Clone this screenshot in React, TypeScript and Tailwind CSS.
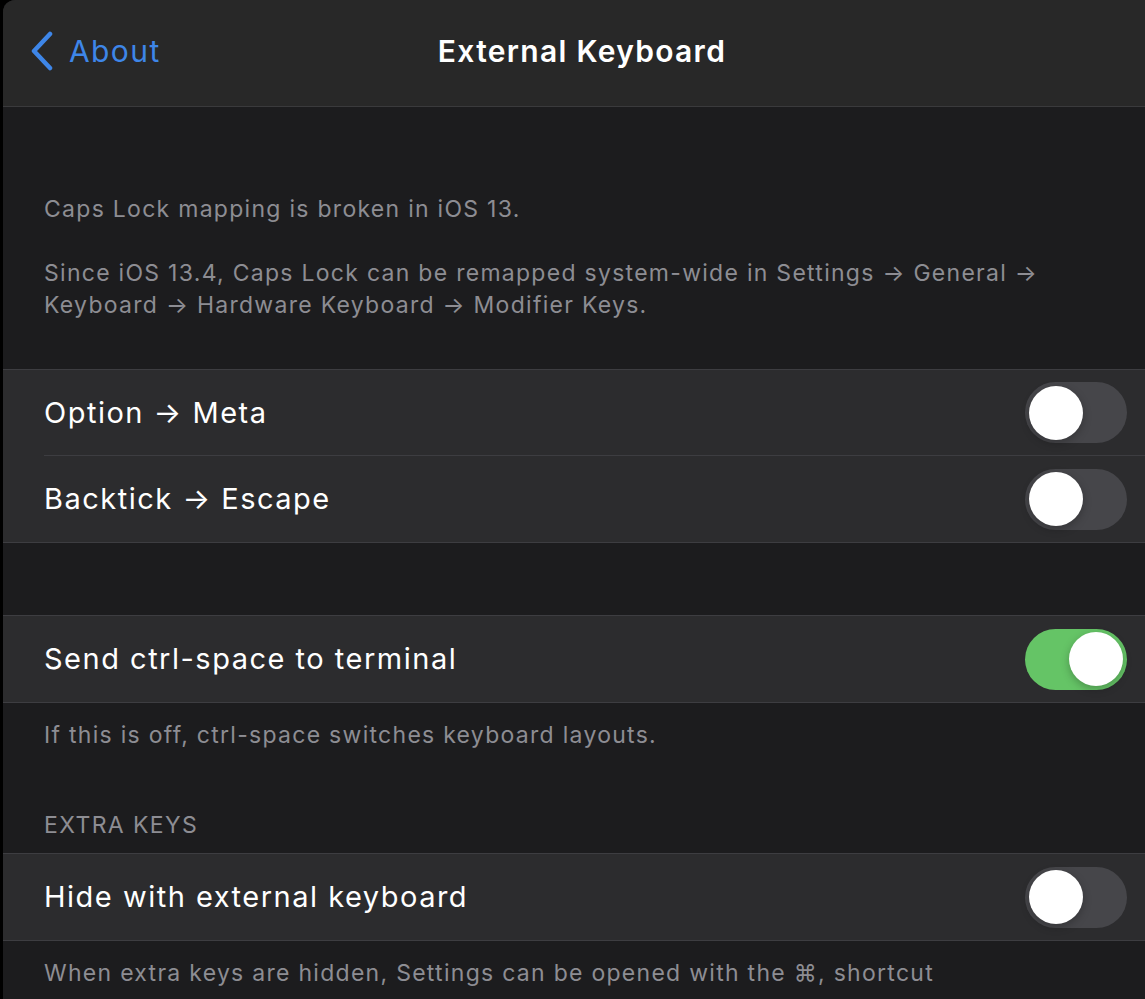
import React from "react";

function Toggle({ on }: { on?: boolean }) {
  return (
    <div
      className={`relative h-[61px] w-[102px] shrink-0 rounded-full ${on ? "bg-[#65c466]" : "bg-[#46464a]"}`}
    >
      <div
        className={`absolute top-[3.5px] h-[54px] w-[54px] rounded-full bg-white shadow-[0_3px_8px_rgba(0,0,0,0.25)] ${on ? "right-[4px]" : "left-[4px]"}`}
      />
    </div>
  );
}

function Row({ label, on, last }: { label: string; on?: boolean; last?: boolean }) {
  return (
    <div className="flex h-[86px] items-center bg-[#2c2c2e] pl-[41px]">
      <div className={`flex h-full flex-1 items-center justify-between pr-[18px] ${last ? "" : "border-b border-[#3d3d41]"}`}>
        <span className="text-[29px] tracking-[1.5px] text-white">{label}</span>
        <Toggle on={on} />
      </div>
    </div>
  );
}

export default function App() {
  return (
    <div
      className="flex min-h-[999px] w-[1145px] bg-black"
      style={{ fontFamily: "Inter, 'Noto Sans', sans-serif" }}
    >
      <div className="w-[3px] shrink-0 bg-black" />
      <div className="flex-1 overflow-hidden rounded-tl-[12px] bg-[#1c1c1e]">
        {/* Nav bar */}
        <div className="relative flex h-[107px] items-center border-b border-[#3a3a3c] bg-[#282828] pb-[4px]">
          <div className="flex items-center pl-[26px]">
            <svg width="26" height="40" viewBox="0 0 26 40" className="mr-[14px]">
              <path d="M21 3 L5 20 L21 37" fill="none" stroke="#3e86e8" strokeWidth="4.5" strokeLinecap="round" strokeLinejoin="round" />
            </svg>
            <span className="text-[30px] tracking-[1.4px] text-[#3e86e8]">About</span>
          </div>
          <div className="pointer-events-none absolute inset-x-0 top-0 flex h-full items-center justify-center pb-[4px] pl-[16px]">
            <span className="text-[30px] font-semibold tracking-[1.3px] text-white">External Keyboard</span>
          </div>
        </div>

        {/* Caps lock notes */}
        <div className="px-[41px] pb-[48px] pt-[86px] text-[23px] leading-[32px] tracking-[1.28px] text-[#8d8d93]">
          <p>Caps Lock mapping is broken in iOS 13.</p>
          <p className="mt-[32px]">
            Since iOS 13.4, Caps Lock can be remapped system-wide in Settings → General →
            <br />
            Keyboard → Hardware Keyboard → Modifier Keys.
          </p>
        </div>

        <div className="border-y border-[#3d3d41]">
          <Row label="Option → Meta" />
          <Row label="Backtick → Escape" last />
        </div>

        <div className="h-[72px]" />

        <div className="border-y border-[#3d3d41]">
          <Row label="Send ctrl-space to terminal" on last />
        </div>

        <div className="px-[41px] pt-[16px] text-[23px] leading-[32px] tracking-[1.28px] text-[#8d8d93]">
          If this is off, ctrl-space switches keyboard layouts.
        </div>

        <div className="px-[41px] pb-[12px] pt-[58px] text-[23px] leading-[32px] tracking-[1.4px] text-[#8d8d93]">
          EXTRA KEYS
        </div>

        <div className="border-y border-[#3d3d41]">
          <Row label="Hide with external keyboard" last />
        </div>

        <div className="px-[41px] pt-[16px] text-[23px] leading-[32px] tracking-[1.28px] text-[#8d8d93]">
          When extra keys are hidden, Settings can be opened with the ⌘, shortcut
        </div>
      </div>
    </div>
  );
}
